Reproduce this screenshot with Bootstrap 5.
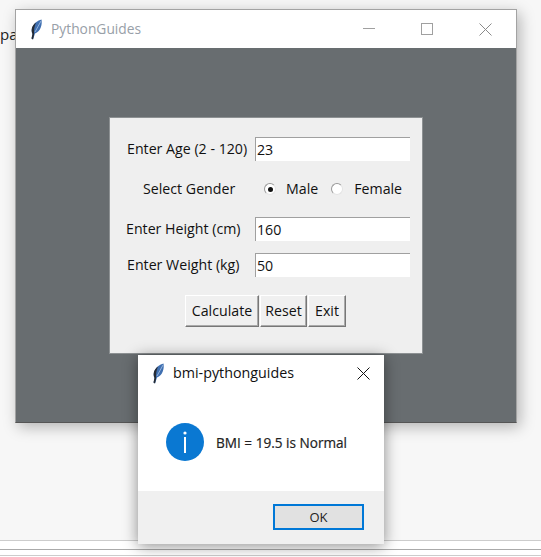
<!DOCTYPE html>
<html lang="en"><head><meta charset="utf-8"><title>PythonGuides</title>
<link href="https://cdn.jsdelivr.net/npm/bootstrap@5.3.0/dist/css/bootstrap.min.css" rel="stylesheet">
<style>
html,body{margin:0;height:100%;overflow:hidden}
body{width:541px;height:557px;background:#f7f7f7;position:relative;font-family:"Open Sans","Noto Sans",sans-serif;color:#111}
.desk-text{position:absolute;left:0;top:24px;font-size:15px;line-height:20px;color:#222}
.desk-foot{position:absolute;left:0;right:0;top:540px;height:17px;background:#fff;border-top:1px solid #ccc}
.desk-foot i{position:absolute;left:0;right:0;height:1px}
.foot-a{top:8px;background:#aaa}.foot-b{top:14px;background:#ccc}
.win-main{position:absolute;left:15px;top:9px;width:502px;height:414px;border:1px solid #a3a3a3;border-bottom-color:#555;background:#686d70;box-shadow:3px 4px 14px rgba(0,0,0,.28)}
.win-bar{height:38px;background:#fff;padding-left:13px}
.win-name{font-size:13.8px;color:#98a0a8;margin-left:8px}
.ctrls{margin-left:auto;margin-right:1px}
.ctrl{width:58.5px;height:38px}
.form-frame{width:312px;height:235px;background:#efefef;margin:70px 0 0 94px;padding-top:19px;font-size:14.2px;box-shadow:0 0 0 1px #8d9193}
.line{height:24px;margin-bottom:12px}
.lbl{width:145px;white-space:nowrap}
.lbl-a{padding-left:17px}.lbl-g{padding-left:33px}.lbl-h{padding-left:16px}.lbl-w{padding-left:17px}
.entry{width:155px;height:24px;background:#fff;border:0;border-top:1px solid #a0a0a0;border-left:1px solid #a0a0a0;padding:0 1px;font:inherit;line-height:22px;color:#111;outline:0;border-radius:0}
.line-g{height:24px;margin:16px 0}
.radio-dot{width:12px;height:12px;border-radius:50%;background:#fff;border:1px solid #999;border-right-color:#e4e4e4;border-bottom-color:#e4e4e4;display:flex;align-items:center;justify-content:center;flex:none}
.radio-dot b{width:5px;height:5px;border-radius:50%;background:#111;display:block}
.gap-m{margin-left:9px}.gap-t{margin-left:10px}.gap-f{margin-left:13px}.gap-u{margin-left:11px}
.tk-row{padding-top:6px}
.tk-btn{height:32px;background:#f0f0f0;border:1px solid #fff;border-right-color:#777;border-bottom-color:#777;box-shadow:inset -1px -1px 0 #aaa;padding:0;font:inherit;color:#111;border-radius:0;margin-right:1px}
.btn-c{width:74px}.btn-r{width:47px}.btn-e{width:38px}
.win-dlg{position:absolute;left:138px;top:355px;width:246px;height:189px;background:#fff;box-shadow:0 2px 14px rgba(0,0,0,.45)}
.dlg-bar{height:36px;padding-left:13px;font-size:14.3px;color:#111}
.dlg-x{margin-right:14px}
.dlg-body{height:100px;padding:32px 0 0 28px;font-size:13.6px;color:#222}
.dlg-msg{margin:10px 0 0 12px;-webkit-text-stroke:.2px #222;white-space:nowrap}
.dlg-foot{height:53px;background:#f0f0f0;padding:13px 20px 0 0}
.ok-btn{width:91px;height:26px;background:#e1e1e1;border:2px solid #0078d7;border-radius:0;padding:0;font-size:13px;color:#222;line-height:20px}
</style></head>
<body>
<div class="desk-text">pa</div>
<div class="desk-foot"><i class="foot-a"></i><i class="foot-b"></i></div>

<div class="win-main">
  <div class="win-bar d-flex align-items-center">
    <svg width="14" height="21" viewBox="0 0 14 21"><path d="M2.5 19.5 L3.5 15 C1 10 4.5 2.5 12.5 .5 C13.5 6 11.5 12.5 6 14.5 L4 20.5Z" fill="#3f6fb0"/><path d="M3.5 15C1.5 10 3.5 6 7 3.5C5 8 5 11 5 16L4 20.5L2.5 19.5Z" fill="#262b33"/><path d="M6 13C8 9 10 6 12 2" stroke="#a9c4e6" stroke-width=".8" fill="none"/></svg>
    <span class="win-name">PythonGuides</span>
    <div class="ctrls d-flex">
      <div class="ctrl d-flex align-items-center justify-content-center"><svg width="12" height="12"><path d="M0 5.5H12" stroke="#a0a0a0"/></svg></div>
      <div class="ctrl d-flex align-items-center justify-content-center"><svg width="12" height="12"><rect x=".5" y=".5" width="11" height="11" fill="none" stroke="#a0a0a0"/></svg></div>
      <div class="ctrl d-flex align-items-center justify-content-center"><svg width="13" height="13"><path d="M.5 .5L12.5 12.5M12.5 .5L.5 12.5" stroke="#8a8a8a"/></svg></div>
    </div>
  </div>
  <div class="form-frame">
    <div class="line d-flex align-items-center"><span class="lbl lbl-a">Enter Age (2 - 120)</span><input class="entry" value="23"></div>
    <div class="line-g d-flex align-items-center"><span class="lbl lbl-g">Select Gender</span>
      <span class="radio-dot gap-m"><b></b></span><span class="gap-t">Male</span>
      <span class="radio-dot gap-f"></span><span class="gap-u">Female</span></div>
    <div class="line d-flex align-items-center"><span class="lbl lbl-h">Enter Height (cm)</span><input class="entry" value="160"></div>
    <div class="line d-flex align-items-center"><span class="lbl lbl-w">Enter Weight (kg)</span><input class="entry" value="50"></div>
    <div class="d-flex justify-content-center tk-row">
      <button class="tk-btn btn-c">Calculate</button><button class="tk-btn btn-r">Reset</button><button class="tk-btn btn-e">Exit</button>
    </div>
  </div>
</div>

<div class="win-dlg">
  <div class="dlg-bar d-flex align-items-center">
    <svg width="14" height="21" viewBox="0 0 14 21"><path d="M2.5 19.5 L3.5 15 C1 10 4.5 2.5 12.5 .5 C13.5 6 11.5 12.5 6 14.5 L4 20.5Z" fill="#3f6fb0"/><path d="M3.5 15C1.5 10 3.5 6 7 3.5C5 8 5 11 5 16L4 20.5L2.5 19.5Z" fill="#262b33"/><path d="M6 13C8 9 10 6 12 2" stroke="#a9c4e6" stroke-width=".8" fill="none"/></svg>
    <span class="ms-2">bmi-pythonguides</span>
    <svg class="ms-auto dlg-x" width="13" height="13"><path d="M.5 .5L12.5 12.5M12.5 .5L.5 12.5" stroke="#111"/></svg>
  </div>
  <div class="dlg-body d-flex align-items-start">
    <svg width="38" height="38" viewBox="0 0 38 38"><circle cx="19" cy="19" r="19" fill="#0a78d2"/><circle cx="19" cy="10" r="1.6" fill="#fff"/><rect x="18" y="14" width="2" height="16" fill="#fff"/></svg>
    <span class="dlg-msg">BMI = 19.5 is Normal</span>
  </div>
  <div class="dlg-foot d-flex justify-content-end"><button class="ok-btn">OK</button></div>
</div>
</body></html>
